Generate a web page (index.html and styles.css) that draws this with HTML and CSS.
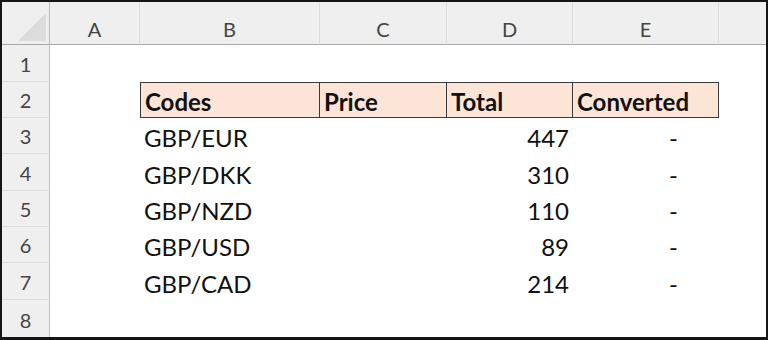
FILE: index.html
```html
<!DOCTYPE html>
<html>
<head>
<meta charset="utf-8">
<link rel="stylesheet" href="styles.css">
</head>
<body>
<div class="sheet">
  <div class="grid">
    <div class="corner"><span class="tri"></span></div>
    <div class="colh">A</div>
    <div class="colh">B</div>
    <div class="colh">C</div>
    <div class="colh">D</div>
    <div class="colh">E</div>
    <div class="colh last"></div>

    <div class="rowh">1</div>
    <div class="cell"></div><div class="cell"></div><div class="cell"></div><div class="cell"></div><div class="cell"></div><div class="cell"></div>

    <div class="rowh">2</div>
    <div class="cell"></div>
    <div class="cell th first">Codes</div>
    <div class="cell th">Price</div>
    <div class="cell th">Total</div>
    <div class="cell th">Converted</div>
    <div class="cell"></div>

    <div class="rowh">3</div>
    <div class="cell"></div>
    <div class="cell txt">GBP/EUR</div>
    <div class="cell"></div>
    <div class="cell num">447</div>
    <div class="cell dash">-</div>
    <div class="cell"></div>

    <div class="rowh">4</div>
    <div class="cell"></div>
    <div class="cell txt">GBP/DKK</div>
    <div class="cell"></div>
    <div class="cell num">310</div>
    <div class="cell dash">-</div>
    <div class="cell"></div>

    <div class="rowh">5</div>
    <div class="cell"></div>
    <div class="cell txt">GBP/NZD</div>
    <div class="cell"></div>
    <div class="cell num">110</div>
    <div class="cell dash">-</div>
    <div class="cell"></div>

    <div class="rowh">6</div>
    <div class="cell"></div>
    <div class="cell txt">GBP/USD</div>
    <div class="cell"></div>
    <div class="cell num">89</div>
    <div class="cell dash">-</div>
    <div class="cell"></div>

    <div class="rowh">7</div>
    <div class="cell"></div>
    <div class="cell txt">GBP/CAD</div>
    <div class="cell"></div>
    <div class="cell num">214</div>
    <div class="cell dash">-</div>
    <div class="cell"></div>

    <div class="rowh lastrow">8</div>
    <div class="cell"></div><div class="cell"></div><div class="cell"></div><div class="cell"></div><div class="cell"></div><div class="cell"></div>
  </div>
</div>
</body>
</html>
```
FILE: styles.css
```css
* { box-sizing: border-box; }
html, body { margin: 0; padding: 0; background: #fff; }
body { font-family: Lato, "Liberation Sans", sans-serif; color: #111; }

.sheet {
  width: 768px;
  height: 340px;
  border: 2px solid #151515;
  border-bottom-width: 3px;
  border-right-width: 2px;
  overflow: hidden;
  background: #fff;
}

.grid {
  display: grid;
  grid-template-columns: 48px 90px 180px 127px 126px 146px 47px;
  grid-template-rows: 43px 37px 36px 36px 37px 36px 36px 37px 37px;
}

.corner {
  background: #efefef;
  border-right: 1px solid #bcbcbc;
  border-bottom: 1px solid #a9a9a9;
  position: relative;
}
.tri {
  position: absolute;
  right: 3px;
  bottom: 3px;
  width: 0;
  height: 0;
  border-left: 28px solid transparent;
  border-bottom: 28px solid #dcdcdc;
}

.colh {
  background: #efefef;
  border-bottom: 1px solid #a9a9a9;
  border-right: 1px solid #dcdcdc;
  color: #444;
  font-size: 20px;
  display: flex;
  align-items: flex-end;
  justify-content: center;
  line-height: 1;
  padding-bottom: 5px;
}
.colh.last { border-right: none; }

.rowh {
  background: #efefef;
  border-right: 1px solid #bcbcbc;
  border-bottom: 1px solid #dcdcdc;
  color: #444;
  font-size: 20px;
  line-height: 1;
  display: flex;
  align-items: flex-end;
  justify-content: center;
  padding-bottom: 7px;
}
.rowh.lastrow { border-bottom: none; }

.cell {
  font-size: 24px;
  line-height: 1;
  display: flex;
  align-items: flex-end;
  padding: 0 4px 4px 4px;
  white-space: nowrap;
}

.th {
  background: #fce4d6;
  font-weight: bold;
  border-top: 1px solid #3a3a3a;
  border-bottom: 1px solid #3a3a3a;
  border-right: 1px solid #3a3a3a;
  padding-bottom: 3px;
}
.th.first { border-left: 1px solid #3a3a3a; }

.num { justify-content: flex-end; }
.dash { justify-content: flex-end; padding-right: 41px; }
```
